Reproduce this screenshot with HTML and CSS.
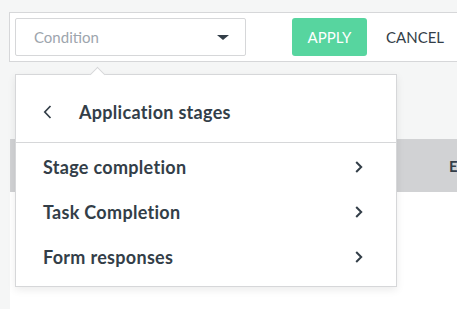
FILE: index.html
```html
<!DOCTYPE html>
<html>
<head>
<meta charset="utf-8">
<link rel="stylesheet" href="styles.css">
</head>
<body>
<div class="page">
  <div class="filterbar">
    <div class="select">
      <span class="placeholder">Condition</span>
      <svg class="caret" width="12" height="5" viewBox="0 0 12 5"><path d="M0 0H12L6 5Z" fill="#333e48"/></svg>
    </div>
    <button class="apply">APPLY</button>
    <button class="cancel">CANCEL</button>
  </div>
  <div class="table">
    <div class="thead"><span class="col">E</span></div>
    <div class="tbody"></div>
  </div>
  <div class="popup">
    <div class="notch"></div>
    <div class="popup-head">
      <svg class="back" width="9" height="14" viewBox="0 0 9 14"><path d="M7.5 1L1.8 7L7.5 13" fill="none" stroke="#333e48" stroke-width="1.7"/></svg>
      <span class="title">Application stages</span>
    </div>
    <ul class="list">
      <li class="item"><span>Stage completion</span><svg width="8" height="12" viewBox="0 0 8 12"><path d="M1.2 1L6.2 6L1.2 11" fill="none" stroke="#333e48" stroke-width="2"/></svg></li>
      <li class="item"><span>Task Completion</span><svg width="8" height="12" viewBox="0 0 8 12"><path d="M1.2 1L6.2 6L1.2 11" fill="none" stroke="#333e48" stroke-width="2"/></svg></li>
      <li class="item"><span>Form responses</span><svg width="8" height="12" viewBox="0 0 8 12"><path d="M1.2 1L6.2 6L1.2 11" fill="none" stroke="#333e48" stroke-width="2"/></svg></li>
    </ul>
  </div>
</div>
</body>
</html>
```
FILE: styles.css
```css
* { box-sizing: border-box; }
html, body { margin: 0; padding: 0; }
body {
  background: #f5f6f6;
  font-family: Lato, "Open Sans", sans-serif;
  color: #333e48;
  width: 457px;
  height: 309px;
  overflow: hidden;
}
.page {
  position: relative;
  height: 309px;
  padding-top: 12px;
  display: flex;
  flex-direction: column;
}
.filterbar {
  margin-left: 9px;
  height: 50px;
  background: #fff;
  border: 1px solid #d6d7d9;
  border-right: none;
  display: flex;
  align-items: center;
  padding-left: 5px;
}
.select {
  width: 231px;
  height: 38px;
  border: 1px solid #d6d7d9;
  border-radius: 2px;
  display: flex;
  align-items: center;
  justify-content: space-between;
  padding: 0 16px 0 18px;
}
.placeholder {
  font-size: 15px;
  color: #9da5ad;
}
.apply {
  margin-left: 46px;
  width: 75px;
  height: 38px;
  border: none;
  border-radius: 3px;
  background: #57d59f;
  color: #fff;
  font-family: inherit;
  font-size: 15px;
  padding: 0;
}
.cancel {
  margin-left: 19px;
  border: none;
  background: none;
  color: #333e48;
  font-family: inherit;
  font-size: 15px;
  padding: 0;
}
.table {
  margin-left: 10px;
  margin-top: 77px;
  flex: 1;
  display: flex;
  flex-direction: column;
  background: #fff;
}
.thead {
  height: 53px;
  background: #d1d2d4;
  display: flex;
  align-items: center;
  padding-left: 439px;
  font-weight: 700;
  font-size: 15px;
  overflow: hidden;
}
.tbody { flex: 1; }
.popup {
  position: absolute;
  left: 15px;
  top: 74px;
  width: 382px;
  height: 213px;
  background: #fff;
  border: 1px solid #d6d7d9;
  box-shadow: 0 3px 8px rgba(0, 0, 0, 0.08);
}
.notch {
  position: absolute;
  left: 76px;
  top: -6px;
  width: 11px;
  height: 11px;
  background: #fff;
  border-left: 1px solid #d6d7d9;
  border-top: 1px solid #d6d7d9;
  transform: rotate(45deg);
}
.popup-head {
  height: 68px;
  border-bottom: 1px solid #d6d7d9;
  display: flex;
  align-items: center;
  padding: 6px 0 0 27px;
}
.back { display: block; }
.title {
  margin-left: 27px;
  font-size: 18px;
  letter-spacing: 0.3px;
  font-weight: 700;
}
.list {
  list-style: none;
  margin: 0;
  padding: 1px 33px 0 27px;
}
.item {
  height: 45px;
  display: flex;
  align-items: center;
  justify-content: space-between;
  font-size: 18px;
  letter-spacing: 0.3px;
  font-weight: 700;
}
.item svg { display: block; }
```
